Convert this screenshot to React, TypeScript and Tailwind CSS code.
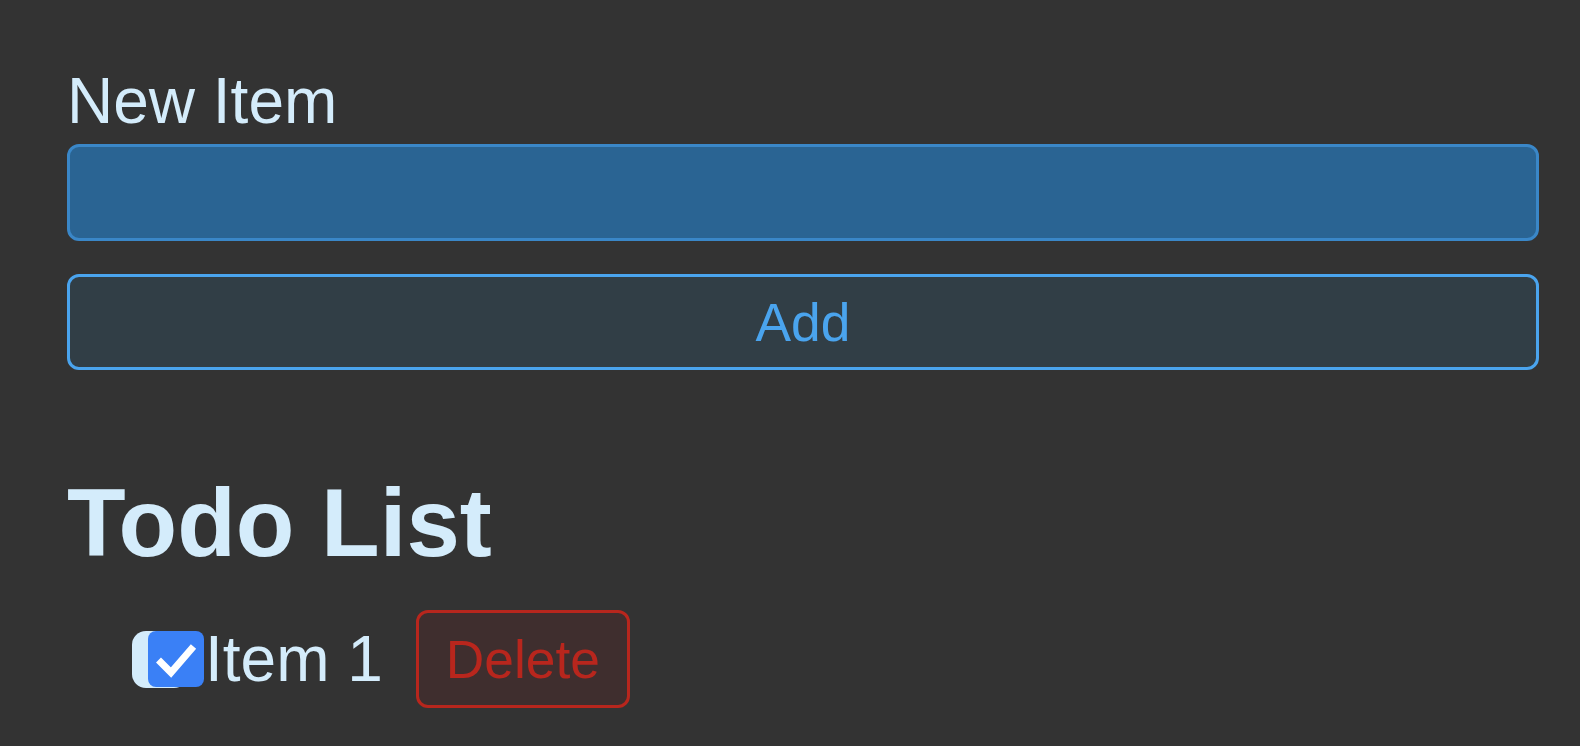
export default function App() {
  return (
    <div className="min-h-screen bg-[#333333] pl-[67px] pt-[64px] font-['Liberation_Sans',Arial,sans-serif] text-[#d4ecfb]">
      <label htmlFor="new-item" className="block text-[64px] leading-[normal]">
        New Item
      </label>
      <input
        id="new-item"
        type="text"
        className="mt-[6px] block h-[97px] w-[1472px] rounded-[12px] border-[3px] border-[#3a87c8] bg-[#2a6493] px-4 text-[53px] text-[#d4ecfb] outline-none"
      />
      <button className="mt-[33px] block h-[96px] w-[1472px] rounded-[12px] border-[3px] border-[#4aa4ee] bg-[#313e46] text-[53.33px] leading-[normal] text-[#4aa4ee]">
        Add
      </button>

      <h2 className="mt-[98px] text-[96px] font-bold leading-[normal]">Todo List</h2>

      <ul className="mt-[32px] ml-[65px]">
        <li className="flex items-center">
          <div className="relative h-[57px] w-[72px]">
            <div className="absolute left-0 top-0 h-[57px] w-[56px] rounded-[14px] bg-[#d4ecfb]" />
            <div className="absolute right-0 top-0 h-[56px] w-[56px] rounded-[8px] bg-[#3a80f6]">
              <svg viewBox="0 0 56 56" className="h-full w-full">
                <path
                  d="M10.5 29 L23 41.5 L45.5 15.5"
                  fill="none"
                  stroke="#ffffff"
                  strokeWidth="7"
                  strokeLinejoin="miter"
                />
              </svg>
            </div>
          </div>
          <span className="ml-[1px] text-[64px] leading-[normal]">Item 1</span>
          <button className="ml-[33px] rounded-[12px] border-[3px] border-[#b8261d] bg-[#3f2e2e] px-[27px] py-[15.5px] text-[53.33px] leading-[normal] text-[#b8261d]">
            Delete
          </button>
        </li>
      </ul>
    </div>
  )
}
